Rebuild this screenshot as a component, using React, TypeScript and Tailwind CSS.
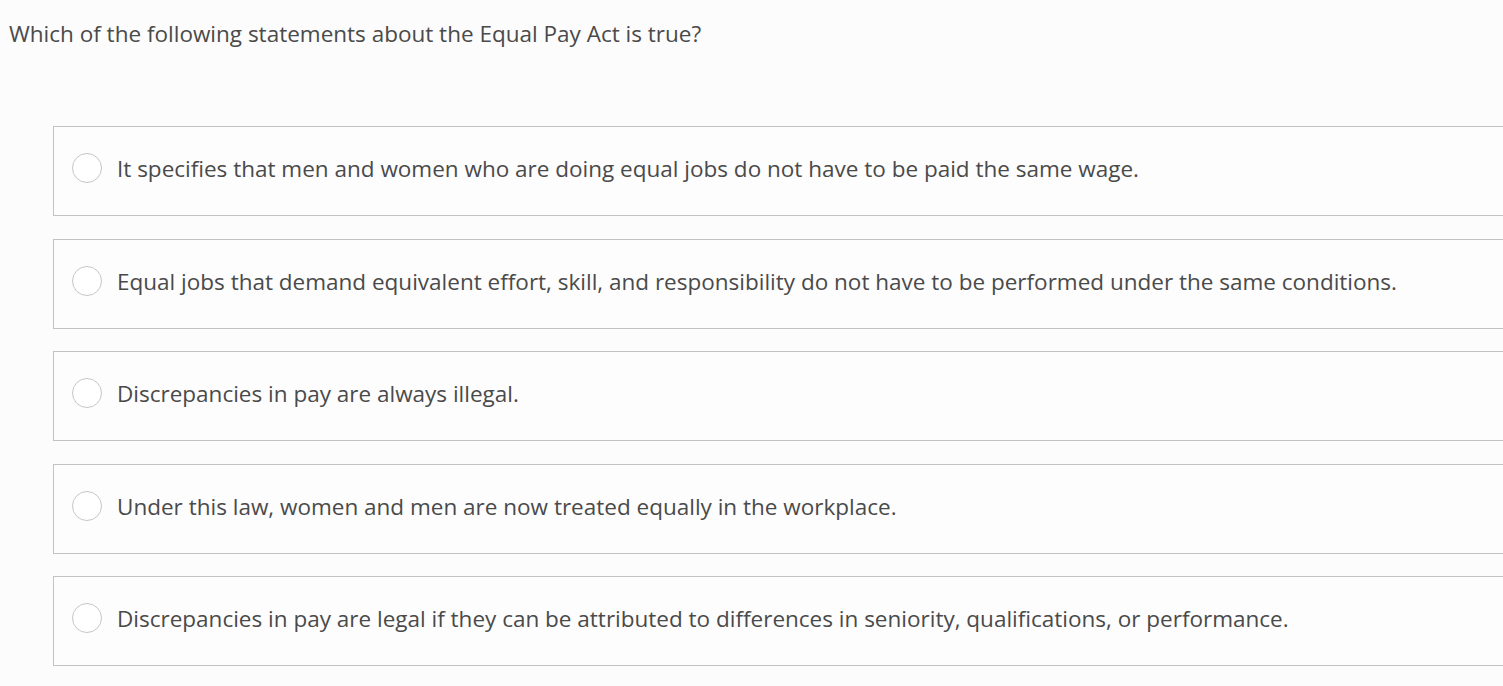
import React from "react";

const options = [
  "It specifies that men and women who are doing equal jobs do not have to be paid the same wage.",
  "Equal jobs that demand equivalent effort, skill, and responsibility do not have to be performed under the same conditions.",
  "Discrepancies in pay are always illegal.",
  "Under this law, women and men are now treated equally in the workplace.",
  "Discrepancies in pay are legal if they can be attributed to differences in seniority, qualifications, or performance.",
];

export default function App() {
  return (
    <div
      className="w-full h-[686px] overflow-hidden bg-[#fcfcfc] text-[#4a4a4a]"
      style={{ fontFamily: '"Open Sans", sans-serif' }}
    >
      <div className="pl-[9px] pt-[19px] text-[22.5px] leading-[30px]">
        Which of the following statements about the Equal Pay Act is true?
      </div>
      <div className="ml-[53px] mt-[77px] flex flex-col gap-[22.5px] w-[1500px]">
        {options.map((o) => (
          <label
            key={o}
            className="flex items-center h-[90px] border border-[#c2c2c2] bg-[#fdfdfd] pl-[18px]"
          >
            <span className="w-[30px] h-[30px] rounded-full border border-[#c6c6c6] bg-white shrink-0 -translate-y-[3px]" />
            <span className="ml-[15px] text-[22.5px] leading-[30px] -translate-y-[2px]">{o}</span>
          </label>
        ))}
      </div>
    </div>
  );
}
